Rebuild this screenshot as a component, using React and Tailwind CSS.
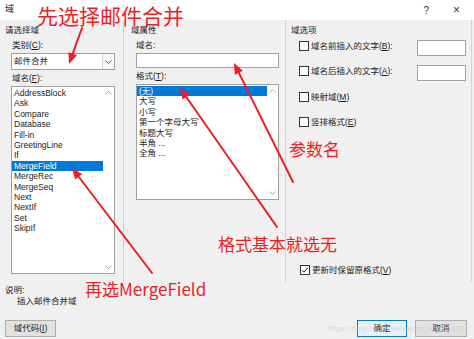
import React from "react";

const fieldNames = [
  "AddressBlock", "Ask", "Compare", "Database", "Fill-in", "GreetingLine", "If",
  "MergeField", "MergeRec", "MergeSeq", "Next", "NextIf", "Set", "SkipIf",
];
const formats = ["(无)", "大写", "小写", "第一个字母大写", "标题大写", "半角 ...", "全角 ..."];

// tail x, tail y, tip x, tip y
const arrows = [
  [82, 28, 69, 64],
  [152, 273, 72, 168],
  [277, 227, 180, 88],
  [293, 182, 234, 63],
];

function arrowParts([x1, y1, x2, y2]) {
  const dx = x2 - x1, dy = y2 - y1;
  const len = Math.hypot(dx, dy);
  const ux = dx / len, uy = dy / len;
  const bx = x2 - ux * 11, by = y2 - uy * 11;
  const px = -uy * 4.5, py = ux * 4.5;
  return {
    line: { x1, y1, x2: bx, y2: by },
    head: `${x2},${y2} ${bx + px},${by + py} ${bx - px},${by - py}`,
  };
}

function ScrollArrows() {
  return (
    <div className="w-[11px] flex flex-col justify-between items-center py-[4px]">
      <svg width="7" height="4" viewBox="0 0 7 4">
        <polyline points="0.5,3.5 3.5,0.5 6.5,3.5" fill="none" stroke="#a6a6a6" strokeWidth="1" />
      </svg>
      <svg width="7" height="4" viewBox="0 0 7 4">
        <polyline points="0.5,0.5 3.5,3.5 6.5,0.5" fill="none" stroke="#a6a6a6" strokeWidth="1" />
      </svg>
    </div>
  );
}

function ListBox({ items, selected, className }) {
  return (
    <div className={`flex border border-[#a0a0a0] bg-white ${className}`}>
      <div className="flex-1 pt-[1px]">
        {items.map((it, i) => (
          <div
            key={it}
            className={`h-[10.4px] leading-[10.4px] pl-[2px] whitespace-nowrap ${
              i === selected ? "bg-[#0078d7] text-white" : "text-[#1a1a1a]"
            }`}
          >
            {it}
          </div>
        ))}
      </div>
      <ScrollArrows />
    </div>
  );
}

function CheckBox({ checked }) {
  return (
    <span className="w-[10px] h-[10px] border border-[#333333] bg-white flex items-center justify-center shrink-0">
      {checked && (
        <svg width="8" height="8" viewBox="0 0 8 8">
          <polyline points="1,4.2 3,6.2 7,1.5" fill="none" stroke="#222222" strokeWidth="1" />
        </svg>
      )}
    </span>
  );
}

function OptionRow({ label, checked, className }) {
  return (
    <div className={`flex items-center gap-[2px] ml-[8px] h-[10px] ${className}`}>
      <CheckBox checked={checked} />
      <span className="leading-[10px] whitespace-nowrap">{label}</span>
    </div>
  );
}

export default function App() {
  return (
    <div className="relative w-[474px] h-[339px] overflow-hidden bg-[#f0f0f0] text-[8.5px] text-[#1a1a1a] font-['Liberation_Sans','Noto_Sans_CJK_SC',sans-serif]">
      {/* title bar */}
      <div className="h-[20px] bg-white flex items-center pl-[5px]">
        <span className="text-[9px]">域</span>
        <span className="ml-auto text-[10px] text-[#333333]">?</span>
        <span className="ml-[24px] mr-[14px] text-[12px] text-[#333333] leading-none">×</span>
      </div>

      <div className="flex h-[262px]">
        {/* 请选择域 */}
        <div className="w-[123px] pl-[5px] pt-[5px] flex flex-col">
          <div className="h-[10px] leading-[10px]">请选择域</div>
          <div className="h-[10px] leading-[10px] mt-[5px] ml-[7px]">类别(<u>C</u>):</div>
          <div className="mt-[3px] ml-[6px] w-[104px] h-[17px] flex border border-[#a0a0a0] bg-white">
            <span className="flex-1 pl-[2px] leading-[15px]">邮件合并</span>
            <span className="w-[12px] border-l border-[#d0d0d0] bg-[#f7f7f7] flex items-center justify-center">
              <svg width="7" height="4" viewBox="0 0 7 4">
                <polyline points="0.5,0.5 3.5,3.5 6.5,0.5" fill="none" stroke="#606060" strokeWidth="1" />
              </svg>
            </span>
          </div>
          <div className="h-[10px] leading-[10px] mt-[3px] ml-[7px]">域名(<u>F</u>):</div>
          <ListBox items={fieldNames} selected={7} className="mt-[3px] ml-[6px] w-[104px] h-[188px]" />
        </div>

        {/* 域属性 */}
        <div className="w-[162px] border-l border-[#d2d2d2] pl-[7px] pt-[5px] flex flex-col">
          <div className="h-[10px] leading-[10px]">域属性</div>
          <div className="h-[10px] leading-[10px] mt-[5px] ml-[5px]">域名:</div>
          <div className="mt-[3px] ml-[5px] w-[143px] h-[15px] border border-[#a0a0a0] bg-white"></div>
          <div className="h-[10px] leading-[10px] mt-[3px] ml-[5px]">格式(<u>T</u>):</div>
          <ListBox items={formats} selected={0} className="mt-[3px] ml-[5px] w-[143px] h-[116px]" />
        </div>

        {/* 域选项 */}
        <div className="w-[187px] border-l border-r border-[#d2d2d2] pl-[5px] pr-[5px] pt-[5px] flex flex-col">
          <div className="h-[10px] leading-[10px]">域选项</div>
          <div className="mt-[5px] h-[16px] flex">
            <OptionRow label={<>域名前插入的文字(<u>B</u>):</>} className="mt-[1px]" />
            <div className="ml-auto w-[49px] h-[16px] border border-[#a0a0a0] bg-white"></div>
          </div>
          <div className="mt-[9px] h-[16px] flex">
            <OptionRow label={<>域名后插入的文字(<u>A</u>):</>} className="mt-[1px]" />
            <div className="ml-auto w-[49px] h-[16px] border border-[#a0a0a0] bg-white"></div>
          </div>
          <OptionRow label={<>映射域(<u>M</u>)</>} className="mt-[11px]" />
          <OptionRow label={<>竖排格式(<u>E</u>)</>} className="mt-[15px]" />
          <OptionRow label={<>更新时保留原格式(<u>V</u>)</>} checked className="mt-[138px] ml-[9px]" />
        </div>
      </div>

      {/* bottom */}
      <div className="pl-[5px] pt-[3px]">
        <div className="h-[10px] leading-[10px]">说明:</div>
        <div className="h-[10px] leading-[10px] mt-[1px] ml-[12px]">插入邮件合并域</div>
        <div className="mt-[14px] flex h-[17px]">
          <button className="w-[51px] h-[17px] border border-[#adadad] bg-[#e1e1e1] leading-[15px]">域代码(<u>I</u>)</button>
          <button className="ml-auto w-[50px] h-[17px] border border-[#0078d7] bg-[#e5f1fb] leading-[15px]">确定</button>
          <button className="ml-[8px] mr-[7px] w-[52px] h-[17px] border border-[#adadad] bg-[#e1e1e1] leading-[15px]">取消</button>
        </div>
      </div>

      {/* watermark */}
      <div className="absolute left-[328px] top-[323px] text-[8px] text-[#c8c8c8]/60 whitespace-nowrap pointer-events-none">
        https://blog.csdn.net/weixin_43896318
      </div>

      {/* annotations */}
      <svg className="absolute inset-0 pointer-events-none" width="474" height="339">
        {arrows.map((a, i) => {
          const p = arrowParts(a);
          return (
            <g key={i}>
              <line {...p.line} stroke="#ee1d23" strokeWidth="2" strokeLinecap="round" />
              <polygon points={p.head} fill="#ee1d23" />
            </g>
          );
        })}
      </svg>
      <div className="absolute left-[37px] top-[5px] text-[21px] leading-[21px] text-[#ee1d23] font-['Noto_Sans_CJK_SC',sans-serif] whitespace-nowrap">
        先选择邮件合并
      </div>
      <div className="absolute left-[289px] top-[140px] text-[17px] leading-[17px] text-[#ee1d23] font-['Noto_Sans_CJK_SC',sans-serif] whitespace-nowrap">
        参数名
      </div>
      <div className="absolute left-[218px] top-[235px] text-[17px] leading-[17px] text-[#ee1d23] font-['Noto_Sans_CJK_SC',sans-serif] whitespace-nowrap">
        格式基本就选无
      </div>
      <div className="absolute left-[85px] top-[280px] text-[17px] leading-[17px] text-[#ee1d23] font-['Noto_Sans_CJK_SC',sans-serif] whitespace-nowrap">
        再选MergeField
      </div>
    </div>
  );
}
